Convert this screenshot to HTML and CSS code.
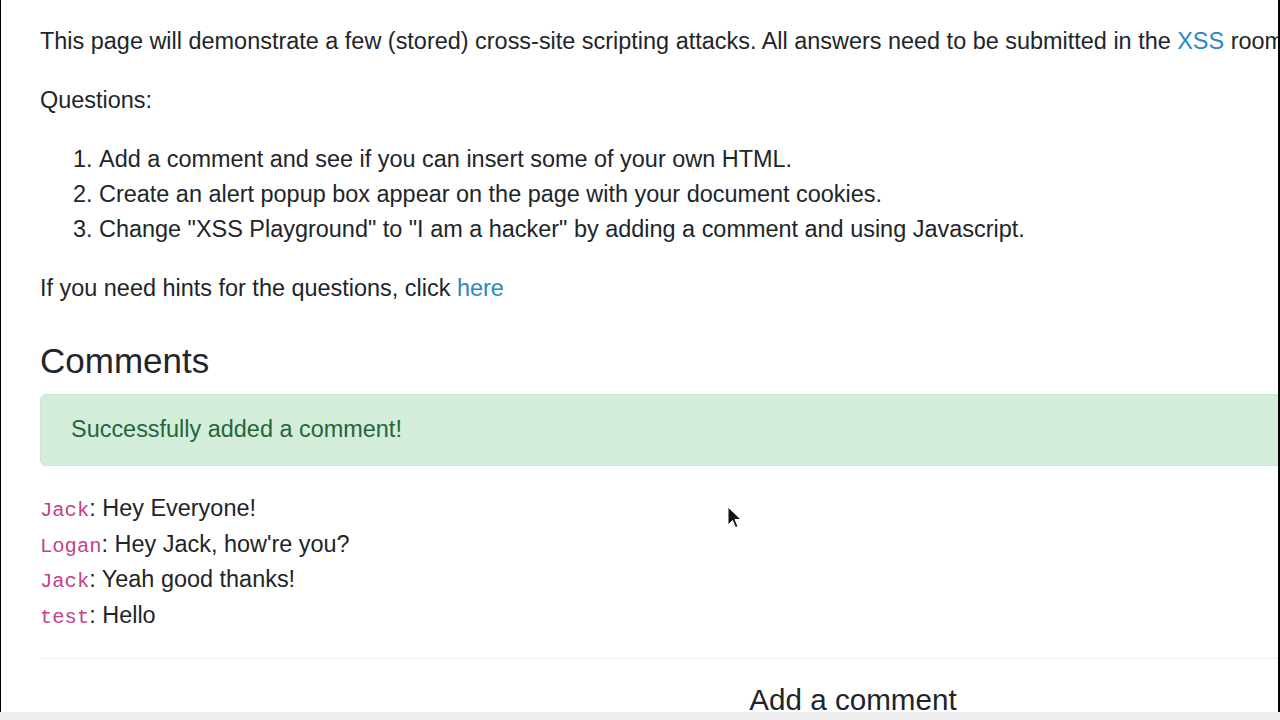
FILE: index.html
```html
<!DOCTYPE html>
<html lang="en">
<head>
    <meta charset="UTF-8">
    <meta name="viewport" content="width=device-width, initial-scale=1.0">
    <title>XSS Playground</title>
    <link rel="stylesheet" href="styles.css">
</head>
<body>
    <div class="screen">
        <div class="content">
            <p>This page will demonstrate a few (stored) cross-site scripting attacks. All answers need to be submitted in the <a href="#">XSS</a> room on TryHackMe.</p>
            <p>Questions:</p>
            <ol>
                <li>Add a comment and see if you can insert some of your own HTML.</li>
                <li>Create an alert popup box appear on the page with your document cookies.</li>
                <li>Change "XSS Playground" to "I am a hacker" by adding a comment and using Javascript.</li>
            </ol>
            <p>If you need hints for the questions, click <a href="#">here</a></p>

            <h4 class="section-title">Comments</h4>
            <div class="alert">Successfully added a comment!</div>

            <div class="comments">
                <div class="comment"><code>Jack</code>: Hey Everyone!</div>
                <div class="comment"><code>Logan</code>: Hey Jack, how're you?</div>
                <div class="comment"><code>Jack</code>: Yeah good thanks!</div>
                <div class="comment"><code>test</code>: Hello</div>
            </div>

            <hr>
            <h5 class="form-title">Add a comment</h5>
        </div>

        <svg class="cursor" width="16" height="24" viewBox="0 0 16 24">
            <path d="M1 1 L1 19 L5.5 14.5 L8.5 21.5 L11 20.5 L8 13.5 L14 13.5 Z" fill="#111" stroke="#fff" stroke-width="1"/>
        </svg>
    </div>
    <div class="scrollbar"></div>
</body>
</html>
```

FILE: styles.css
```css
html, body {
    margin: 0;
    height: 100%;
    overflow: hidden;
}
body {
    display: flex;
    flex-direction: column;
    background-color: #fff;
    color: #212529;
    font-family: "Liberation Sans", Arial, sans-serif;
    font-size: 23.45px;
    line-height: 1.5;
}
.screen {
    position: relative;
    flex: 1;
    overflow: hidden;
    border-left: 1px solid #000;
    border-right: 2px solid #000;
}
.content {
    width: 1626px;
    padding: 24px 0 0 39px;
}
p {
    margin: 0 0 23.6px;
    white-space: nowrap;
}
a {
    color: #2b87c6;
    text-decoration: none;
}
ol {
    margin: 0 0 23.6px;
    padding-left: 59px;
}
.section-title {
    font-size: 35px;
    font-weight: 500;
    line-height: 1.2;
    margin: 34px 0 12px;
}
.alert {
    padding: 17.5px 30px;
    background-color: #d4edda;
    border: 1px solid #c9e8cf;
    border-radius: 6px;
    color: #25653a;
    margin-bottom: 25px;
}
.comment {
    height: 35.7px;
    line-height: 35.7px;
}
code {
    font-family: "Liberation Mono", "Courier New", monospace;
    font-size: 20.5px;
    line-height: 1;
    color: #c4418b;
}
hr {
    margin: 24px 0 23px;
    border: 0;
    border-top: 1px solid #eceeef;
}
.form-title {
    font-size: 29.6px;
    font-weight: 500;
    line-height: 1.2;
    text-align: center;
    margin: 0;
}
.cursor {
    position: absolute;
    left: 726px;
    top: 506px;
}
.scrollbar {
    height: 8px;
    background-color: #efefef;
}
```
